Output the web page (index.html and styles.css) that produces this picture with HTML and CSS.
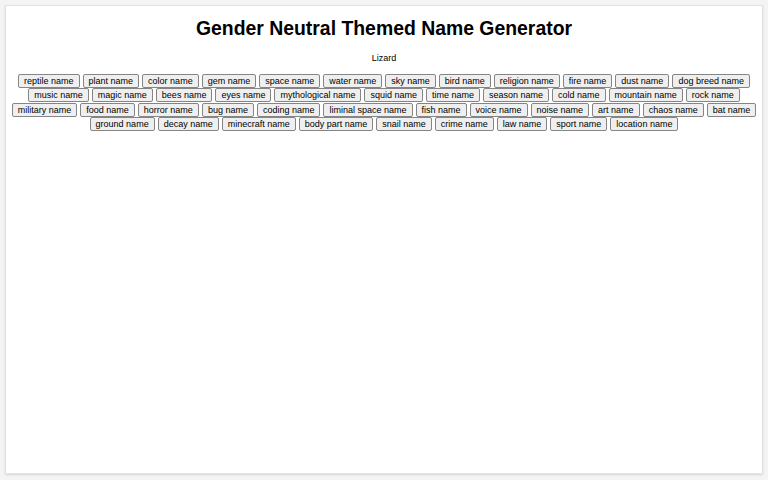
FILE: index.html
```html
<!DOCTYPE html>
<html>
<head>
<meta charset="utf-8">
<link rel="stylesheet" href="styles.css">
</head>
<body>
<div class="page">
  <h1 class="title">Gender Neutral Themed Name Generator</h1>
  <p class="result">Lizard</p>
  <div class="buttons">
    <button class="btn">reptile name</button>
    <button class="btn">plant name</button>
    <button class="btn">color name</button>
    <button class="btn">gem name</button>
    <button class="btn">space name</button>
    <button class="btn">water name</button>
    <button class="btn">sky name</button>
    <button class="btn">bird name</button>
    <button class="btn">religion name</button>
    <button class="btn">fire name</button>
    <button class="btn">dust name</button>
    <button class="btn">dog breed name</button>
    <button class="btn">music name</button>
    <button class="btn">magic name</button>
    <button class="btn">bees name</button>
    <button class="btn">eyes name</button>
    <button class="btn">mythological name</button>
    <button class="btn">squid name</button>
    <button class="btn">time name</button>
    <button class="btn">season name</button>
    <button class="btn">cold name</button>
    <button class="btn">mountain name</button>
    <button class="btn">rock name</button>
    <button class="btn">military name</button>
    <button class="btn">food name</button>
    <button class="btn">horror name</button>
    <button class="btn">bug name</button>
    <button class="btn">coding name</button>
    <button class="btn">liminal space name</button>
    <button class="btn">fish name</button>
    <button class="btn">voice name</button>
    <button class="btn">noise name</button>
    <button class="btn">art name</button>
    <button class="btn">chaos name</button>
    <button class="btn">bat name</button>
    <button class="btn">ground name</button>
    <button class="btn">decay name</button>
    <button class="btn">minecraft name</button>
    <button class="btn">body part name</button>
    <button class="btn">snail name</button>
    <button class="btn">crime name</button>
    <button class="btn">law name</button>
    <button class="btn">sport name</button>
    <button class="btn">location name</button>
  </div>
</div>
</body>
</html>
```

FILE: styles.css
```css
html, body {
  margin: 0;
  padding: 0;
  background: #f4f4f4;
  font-family: "Liberation Sans", Arial, sans-serif;
  color: #000;
}
body {
  padding: 5px 5px 6px 5px;
}
.page {
  background: #fff;
  height: 469px;
  box-sizing: border-box;
  border: 1px solid #e2e2e2;
  box-shadow: 0 1px 2px rgba(0,0,0,0.12);
  text-align: center;
  padding: 0 5px;
}
.title {
  font-size: 19.4px;
  font-weight: bold;
  margin: 0;
  padding-top: 10px;
  line-height: 24px;
}
.result {
  font-size: 9px;
  margin: 12px 0 0 0;
  line-height: 12px;
}
.buttons {
  display: flex;
  flex-wrap: wrap;
  justify-content: center;
  column-gap: 3px;
  row-gap: 0.5px;
  margin-top: 9.5px;
}
.btn {
  font-family: "Liberation Sans", Arial, sans-serif;
  font-size: 9px;
  line-height: 10px;
  height: 14px;
  padding: 1px 5px;
  margin: 0;
  background: #efefef;
  color: #000;
  border: 1px solid #858585;
  border-radius: 2px;
}
```
